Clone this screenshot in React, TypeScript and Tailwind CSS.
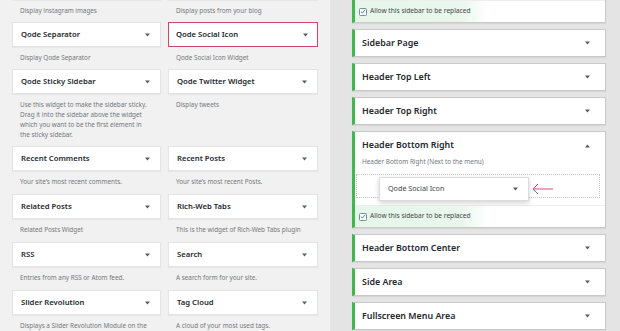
import React from "react";

const Down = () => (
  <svg width="5" height="4" viewBox="0 0 5 4" className="shrink-0">
    <polygon points="0,0.5 5,0.5 2.5,3.5" fill="#555d66" />
  </svg>
);
const Up = () => (
  <svg width="5" height="4" viewBox="0 0 5 4" className="shrink-0">
    <polygon points="0,3.5 5,3.5 2.5,0.5" fill="#555d66" />
  </svg>
);

type W = { t: string; d: string[]; hl?: boolean };

const rows: [W, W][] = [
  [
    { t: "", d: ["Display instagram images"] },
    { t: "", d: ["Display posts from your blog"] },
  ],
  [
    { t: "Qode Separator", d: ["Display Qode Separator"] },
    { t: "Qode Social Icon", d: ["Qode Social Icon Widget"], hl: true },
  ],
  [
    {
      t: "Qode Sticky Sidebar",
      d: [
        "Use this widget to make the sidebar sticky.",
        "Drag it into the sidebar above the widget",
        "which you want to be the first element in",
        "the sticky sidebar.",
      ],
    },
    { t: "Qode Twitter Widget", d: ["Display tweets"] },
  ],
  [
    { t: "Recent Comments", d: ["Your site\u2019s most recent comments."] },
    { t: "Recent Posts", d: ["Your site\u2019s most recent Posts."] },
  ],
  [
    { t: "Related Posts", d: ["Related Posts Widget"] },
    { t: "Rich-Web Tabs", d: ["This is the widget of Rich-Web Tabs plugin"] },
  ],
  [
    { t: "RSS", d: ["Entries from any RSS or Atom feed."] },
    { t: "Search", d: ["A search form for your site."] },
  ],
  [
    { t: "Slider Revolution", d: ["Displays a Slider Revolution Module on the"] },
    { t: "Tag Cloud", d: ["A cloud of your most used tags."] },
  ],
];

const Widget = ({ w, last }: { w: W; last?: boolean }) => (
  <div className="flex flex-col">
    <div
      className={
        w.hl
          ? "h-[25px] bg-white border-[1.5px] border-[#d8436a] flex items-center justify-between pl-[7px] pr-[9px]"
          : "h-[25px] bg-white border border-[#e2e4e7] shadow-[0_1px_1px_rgba(0,0,0,0.04)] flex items-center justify-between pl-[8px] pr-[10px]"
      }
    >
      <span className="text-[7.7px] font-semibold text-[#23282d] leading-none whitespace-nowrap">{w.t}</span>
      <Down />
    </div>
    <div className={(last ? "pb-[6px] " : "pb-[7px] ") + "pt-[6px] pl-[8px] text-[6.35px] leading-[10px] text-[#72777c]"}>
      {w.d.map((l, i) => (
        <div key={i} className="whitespace-nowrap">
          {l}
        </div>
      ))}
    </div>
  </div>
);

const Check = () => (
  <div className="w-[8px] h-[8px] border border-[#7e8993] rounded-[1.5px] bg-white flex items-center justify-center shrink-0">
    <svg width="7" height="7" viewBox="0 0 7 7">
      <path d="M1 3.6 L2.8 5.3 L6 1.3" stroke="#1e8cbe" strokeWidth="1.1" fill="none" />
    </svg>
  </div>
);

const Allow = () => (
  <div className="h-[22px] flex items-center border-t border-[#eeeeee] bg-white">
    <div className="h-full w-[132px] flex items-center gap-[3px] pl-[4px] bg-[linear-gradient(to_right,#e6f6ea_0%,#e9f7ec_80%,rgba(233,247,236,0)_100%)]">
      <Check />
      <span className="text-[6.6px] text-[#444] whitespace-nowrap leading-none">Allow this sidebar to be replaced</span>
    </div>
  </div>
);

const Card = ({ t }: { t: string }) => (
  <div className="h-[28px] bg-white border border-[#c9c9c9] border-l-[3px] border-l-[#46b450] shadow-[0_1px_1px_rgba(0,0,0,0.06)] flex items-center justify-between pl-[7px] pr-[15px] shrink-0">
    <span className="text-[8.9px] font-semibold text-[#23282d] leading-none">{t}</span>
    <Down />
  </div>
);

export default function App() {
  return (
    <div
      className="w-[620px] h-[331px] overflow-hidden flex bg-[#e4e4e4]"
      style={{ fontFamily: '"Noto Sans", "Open Sans", sans-serif' }}
    >
      <div className="w-[330px] h-full bg-[#f1f1f1] shrink-0 overflow-hidden">
        <div className="grid grid-cols-[149px_150px] gap-x-[7px] pl-[12px] mt-[-25px]">
          {rows.map((r, i) => (
            <React.Fragment key={i}>
              <Widget w={r[0]} last={i < 3} />
              <Widget w={r[1]} last={i < 3} />
            </React.Fragment>
          ))}
        </div>
      </div>
      <div className="flex-1 h-full overflow-hidden pl-[22px] pr-[14px]">
        <div className="flex flex-col gap-[6px] mt-[-12px]">
          <div className="bg-white border border-[#c9c9c9] border-l-[3px] border-l-[#46b450] border-t-0 shadow-[0_1px_1px_rgba(0,0,0,0.06)] pt-[12px] shrink-0">
            <Allow />
          </div>
          <Card t="Sidebar Page" />
          <Card t="Header Top Left" />
          <Card t="Header Top Right" />
          <div className="bg-white border border-[#c9c9c9] border-l-[3px] border-l-[#46b450] shadow-[0_1px_1px_rgba(0,0,0,0.06)] shrink-0">
            <div className="h-[27px] flex items-center justify-between pl-[7px] pr-[15px]">
              <span className="text-[8.9px] font-semibold text-[#23282d] leading-none">Header Bottom Right</span>
              <Up />
            </div>
            <div className="pl-[7px] text-[6.4px] leading-[10px] text-[#72777c] mt-[-2px]">
              Header Bottom Right (Next to the menu)
            </div>
            <div className="ml-[1px] mr-[5px] mt-[7px] h-[24px] border border-dotted border-[#c3c4c7] flex items-start pl-[22px] pt-[2px]">
              <div className="w-[150px] h-[24px] bg-white border border-[#dcdcde] shadow-[0_2px_5px_rgba(0,0,0,0.18)] flex items-center justify-between pl-[8px] pr-[10px] shrink-0">
                <span className="text-[7.2px] text-[#3c434a] leading-none">Qode Social Icon</span>
                <Down />
              </div>
              <svg width="24" height="12" viewBox="0 0 24 12" className="ml-[2px] mt-[6px] shrink-0">
                <path d="M22 6 H2 M7 1 L2 6 L7 11" stroke="#e0457b" strokeWidth="1" fill="none" />
              </svg>
            </div>
            <div className="mt-[7px]">
              <Allow />
            </div>
          </div>
          <Card t="Header Bottom Center" />
          <Card t="Side Area" />
          <Card t="Fullscreen Menu Area" />
        </div>
      </div>
    </div>
  );
}
